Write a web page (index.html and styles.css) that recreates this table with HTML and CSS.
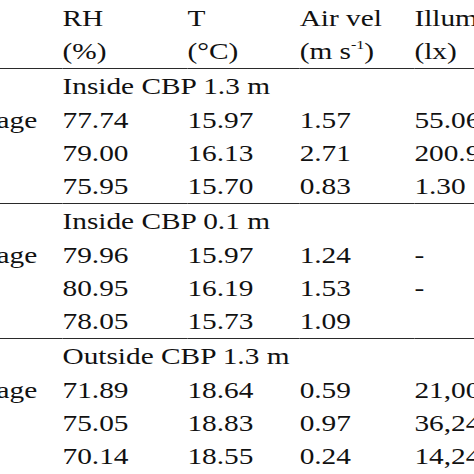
FILE: index.html
```html
<!DOCTYPE html>
<html lang="en">
<head>
    <meta charset="UTF-8">
    <title>Microclimate table</title>
    <link rel="stylesheet" href="styles.css">
</head>
<body>

    <!-- Table is stretched wide, as in the source figure -->
    <div class="sheet">
        <table class="climate">
            <colgroup>
                <col class="c-label">
                <col class="c-rh">
                <col class="c-t">
                <col class="c-air">
                <col class="c-lux">
            </colgroup>
            <thead>
                <tr>
                    <th></th>
                    <th>RH</th>
                    <th>T</th>
                    <th>Air vel</th>
                    <th>Illum</th>
                </tr>
                <tr>
                    <th></th>
                    <th>(%)</th>
                    <th>(°C)</th>
                    <th>(m s<sup>-1</sup>)</th>
                    <th>(lx)</th>
                </tr>
            </thead>

            <tbody>
                <tr class="section">
                    <td></td>
                    <td colspan="4">Inside CBP 1.3 m</td>
                </tr>
                <tr><td>Average</td><td>77.74</td><td>15.97</td><td>1.57</td><td>55.06</td></tr>
                <tr><td>Max</td><td>79.00</td><td>16.13</td><td>2.71</td><td>200.9</td></tr>
                <tr><td>Min</td><td>75.95</td><td>15.70</td><td>0.83</td><td>1.30</td></tr>
            </tbody>

            <tbody>
                <tr class="section">
                    <td></td>
                    <td colspan="4">Inside CBP 0.1 m</td>
                </tr>
                <tr><td>Average</td><td>79.96</td><td>15.97</td><td>1.24</td><td>-</td></tr>
                <tr><td>Max</td><td>80.95</td><td>16.19</td><td>1.53</td><td>-</td></tr>
                <tr><td>Min</td><td>78.05</td><td>15.73</td><td>1.09</td><td></td></tr>
            </tbody>

            <tbody>
                <tr class="section">
                    <td></td>
                    <td colspan="4">Outside CBP 1.3 m</td>
                </tr>
                <tr><td>Average</td><td>71.89</td><td>18.64</td><td>0.59</td><td>21,00</td></tr>
                <tr><td>Max</td><td>75.05</td><td>18.83</td><td>0.97</td><td>36,24</td></tr>
                <tr><td>Min</td><td>70.14</td><td>18.55</td><td>0.24</td><td>14,24</td></tr>
            </tbody>
        </table>
    </div>

</body>
</html>
```

FILE: styles.css
```css
/* General page */
body {
    margin: 0;
    background-color: #fff;
    overflow: hidden;
}

.sheet {
    width: 474px;
    height: 474px;
    overflow: hidden;
}

.climate {
    font-family: "Liberation Serif", "Times New Roman", serif;
    font-size: 23px;
    color: #111;
    border-collapse: collapse;
    table-layout: fixed;
    width: 502px;
    margin-top: 2px;
    margin-left: -47px;
    transform: scaleX(1.275);
    transform-origin: 47px 0;
}

/* Column widths */
.c-label { width: 96px; }
.c-rh    { width: 98px; }
.c-t     { width: 88px; }
.c-air   { width: 90px; }
.c-lux   { width: 130px; }

.climate th,
.climate td {
    padding: 0;
    text-align: left;
    font-weight: normal;
    line-height: 33px;
    white-space: nowrap;
}

/* Keep the superscript from growing the line box */
.climate sup {
    font-size: 0.55em;
    line-height: 1;
    vertical-align: baseline;
    position: relative;
    top: -0.8em;
}

/* Rules between groups */
.climate tbody {
    border-top: 1.5px solid #2a2a2a;
}

.climate .section td {
    line-height: 35px;
}
```
